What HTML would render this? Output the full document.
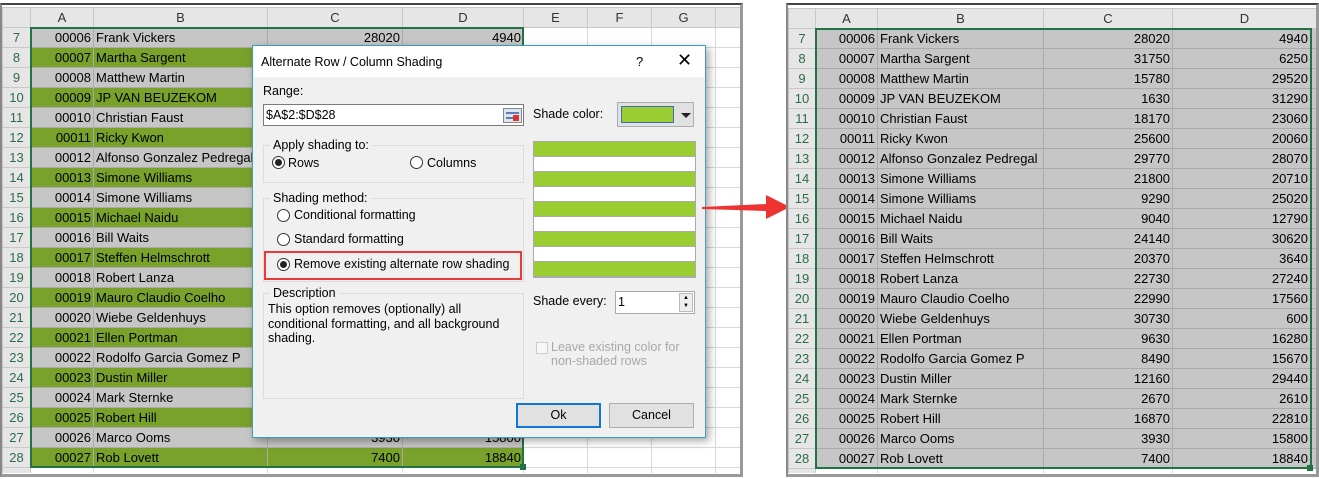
<!DOCTYPE html>
<html><head><meta charset="utf-8"><style>
*{box-sizing:border-box;margin:0;padding:0}
body{width:1319px;height:479px;background:#fff;position:relative;overflow:hidden;font-family:"Liberation Sans",sans-serif;font-size:13px;color:#000}
.grid{position:absolute;border-collapse:collapse;table-layout:fixed}
.grid td{height:20px;border:1px solid #ababab;padding:0 2px;white-space:nowrap;overflow:hidden;line-height:18px}
.grid tr.h td{background:#e6e6e6;text-align:center;color:#333;border-color:#c8c8c8;height:20px}
.grid td.n{background:#e6e6e6;text-align:center;color:#2f6b4a;border-color:#c8c8c8}
.grid td.r{text-align:right}
.grid tr.g td.d{background:#78a22a}
.grid tr.s td.d{background:#c6c6c6}
.grid td.w{background:#fff;border-color:#d9d9d9}
.frame{position:absolute;border-top:2px solid #444;border-left:2px solid #888;border-right:3px solid #999;border-bottom:3px solid #999}
.dlg{position:absolute;left:252px;top:45px;width:454px;height:393px;background:#f0f0f0;border:1px solid #3aa0b4;box-shadow:3px 3px 8px rgba(0,0,0,.35);font-size:12.5px}
.a{position:absolute}
.grp{position:absolute;border:1px solid #dcdcdc}
.lg{position:absolute;background:#f0f0f0;padding:0 3px;top:-8px;left:6px}
.rad{position:absolute;width:13px;height:13px;border:1px solid #333;border-radius:50%;background:#fff}
.rad.on::after{content:"";position:absolute;left:2px;top:2px;width:7px;height:7px;border-radius:50%;background:#222}
.clip{position:absolute;overflow:hidden}
</style></head><body>

<div class="clip" style="left:0;top:0;width:745px;height:473px">
<table class="grid" style="left:2px;top:7px;width:738px">
<colgroup><col style="width:28px"><col style="width:63px"><col style="width:174px"><col style="width:135px"><col style="width:121px"><col style="width:64px"><col style="width:64px"><col style="width:64px"><col style="width:25px"></colgroup>
<tr class="h"><td style="background:#e6e6e6"></td><td>A</td><td>B</td><td>C</td><td>D</td><td>E</td><td>F</td><td>G</td><td></td></tr>
<tr class="s"><td class="n">7</td><td class="d r">00006</td><td class="d">Frank Vickers</td><td class="d r">28020</td><td class="d r">4940</td><td class="w"></td><td class="w"></td><td class="w"></td><td class="w"></td></tr>
<tr class="g"><td class="n">8</td><td class="d r">00007</td><td class="d">Martha Sargent</td><td class="d r">31750</td><td class="d r">6250</td><td class="w"></td><td class="w"></td><td class="w"></td><td class="w"></td></tr>
<tr class="s"><td class="n">9</td><td class="d r">00008</td><td class="d">Matthew Martin</td><td class="d r">15780</td><td class="d r">29520</td><td class="w"></td><td class="w"></td><td class="w"></td><td class="w"></td></tr>
<tr class="g"><td class="n">10</td><td class="d r">00009</td><td class="d">JP VAN BEUZEKOM</td><td class="d r">1630</td><td class="d r">31290</td><td class="w"></td><td class="w"></td><td class="w"></td><td class="w"></td></tr>
<tr class="s"><td class="n">11</td><td class="d r">00010</td><td class="d">Christian Faust</td><td class="d r">18170</td><td class="d r">23060</td><td class="w"></td><td class="w"></td><td class="w"></td><td class="w"></td></tr>
<tr class="g"><td class="n">12</td><td class="d r">00011</td><td class="d">Ricky Kwon</td><td class="d r">25600</td><td class="d r">20060</td><td class="w"></td><td class="w"></td><td class="w"></td><td class="w"></td></tr>
<tr class="s"><td class="n">13</td><td class="d r">00012</td><td class="d">Alfonso Gonzalez Pedregal</td><td class="d r">29770</td><td class="d r">28070</td><td class="w"></td><td class="w"></td><td class="w"></td><td class="w"></td></tr>
<tr class="g"><td class="n">14</td><td class="d r">00013</td><td class="d">Simone Williams</td><td class="d r">21800</td><td class="d r">20710</td><td class="w"></td><td class="w"></td><td class="w"></td><td class="w"></td></tr>
<tr class="s"><td class="n">15</td><td class="d r">00014</td><td class="d">Simone Williams</td><td class="d r">9290</td><td class="d r">25020</td><td class="w"></td><td class="w"></td><td class="w"></td><td class="w"></td></tr>
<tr class="g"><td class="n">16</td><td class="d r">00015</td><td class="d">Michael Naidu</td><td class="d r">9040</td><td class="d r">12790</td><td class="w"></td><td class="w"></td><td class="w"></td><td class="w"></td></tr>
<tr class="s"><td class="n">17</td><td class="d r">00016</td><td class="d">Bill Waits</td><td class="d r">24140</td><td class="d r">30620</td><td class="w"></td><td class="w"></td><td class="w"></td><td class="w"></td></tr>
<tr class="g"><td class="n">18</td><td class="d r">00017</td><td class="d">Steffen Helmschrott</td><td class="d r">20370</td><td class="d r">3640</td><td class="w"></td><td class="w"></td><td class="w"></td><td class="w"></td></tr>
<tr class="s"><td class="n">19</td><td class="d r">00018</td><td class="d">Robert Lanza</td><td class="d r">22730</td><td class="d r">27240</td><td class="w"></td><td class="w"></td><td class="w"></td><td class="w"></td></tr>
<tr class="g"><td class="n">20</td><td class="d r">00019</td><td class="d">Mauro Claudio Coelho</td><td class="d r">22990</td><td class="d r">17560</td><td class="w"></td><td class="w"></td><td class="w"></td><td class="w"></td></tr>
<tr class="s"><td class="n">21</td><td class="d r">00020</td><td class="d">Wiebe Geldenhuys</td><td class="d r">30730</td><td class="d r">600</td><td class="w"></td><td class="w"></td><td class="w"></td><td class="w"></td></tr>
<tr class="g"><td class="n">22</td><td class="d r">00021</td><td class="d">Ellen Portman</td><td class="d r">9630</td><td class="d r">16280</td><td class="w"></td><td class="w"></td><td class="w"></td><td class="w"></td></tr>
<tr class="s"><td class="n">23</td><td class="d r">00022</td><td class="d">Rodolfo Garcia Gomez P</td><td class="d r">8490</td><td class="d r">15670</td><td class="w"></td><td class="w"></td><td class="w"></td><td class="w"></td></tr>
<tr class="g"><td class="n">24</td><td class="d r">00023</td><td class="d">Dustin Miller</td><td class="d r">12160</td><td class="d r">29440</td><td class="w"></td><td class="w"></td><td class="w"></td><td class="w"></td></tr>
<tr class="s"><td class="n">25</td><td class="d r">00024</td><td class="d">Mark Sternke</td><td class="d r">2670</td><td class="d r">2610</td><td class="w"></td><td class="w"></td><td class="w"></td><td class="w"></td></tr>
<tr class="g"><td class="n">26</td><td class="d r">00025</td><td class="d">Robert Hill</td><td class="d r">16870</td><td class="d r">22810</td><td class="w"></td><td class="w"></td><td class="w"></td><td class="w"></td></tr>
<tr class="s"><td class="n">27</td><td class="d r">00026</td><td class="d">Marco Ooms</td><td class="d r">3930</td><td class="d r">15800</td><td class="w"></td><td class="w"></td><td class="w"></td><td class="w"></td></tr>
<tr class="g"><td class="n">28</td><td class="d r">00027</td><td class="d">Rob Lovett</td><td class="d r">7400</td><td class="d r">18840</td><td class="w"></td><td class="w"></td><td class="w"></td><td class="w"></td></tr>
<tr><td class="n"></td><td class="w"></td><td class="w"></td><td class="w"></td><td class="w"></td><td class="w"></td><td class="w"></td><td class="w"></td><td class="w"></td></tr>
</table>
</div>
<div class="frame" style="left:0;top:3px;width:743px;height:474px"></div>
<div class="a" style="left:30px;top:27px;width:494px;height:441px;border:2px solid #217346"></div>
<div class="a" style="left:520px;top:464px;width:6px;height:6px;background:#217346"></div>

<div class="dlg">
 <div class="a" style="left:0;top:0;width:452px;height:31px;background:#fff"></div>
 <div class="a" style="left:8px;top:9px">Alternate Row / Column Shading</div>
 <div class="a" style="left:383px;top:8px;font-size:13px">?</div>
 <div class="a" style="left:424px;top:4px;font-size:18px;font-weight:300">✕</div>
 <div class="a" style="left:10px;top:38px">Range:</div>
 <div class="a" style="left:10px;top:58px;width:261px;height:22px;border:1px solid #7a7a7a;background:#fff;padding:3px 2px">$A$2:$D$28</div>
 <div class="a" style="left:250px;top:62px;width:19px;height:15px;border:1px solid #888;background:#dde6f0"><div style="margin:3px 2px;height:7px;border-top:2px solid #5b7fb5;border-bottom:2px solid #5b7fb5"></div><div style="position:absolute;left:9px;top:6px;width:6px;height:6px;background:#d33"></div></div>
 <div class="a" style="left:280px;top:61px">Shade color:</div>
 <div class="a" style="left:364px;top:56px;width:77px;height:25px;border:1px solid #adadad;background:#e1e1e1"><div style="position:absolute;left:3px;top:3px;width:53px;height:17px;border:1px solid #3c6fb0;background:#9acd32"></div><div style="position:absolute;left:63px;top:10px;border-left:5px solid transparent;border-right:5px solid transparent;border-top:5px solid #222"></div></div>
 <div class="a" style="left:280px;top:95px;width:163px;height:137px;border:1px solid #aaa;background:repeating-linear-gradient(#9acd32 0 14px,#aaa 14px 15px,#fff 15px 29px,#aaa 29px 30px)"></div>
 <div class="grp" style="left:10px;top:99px;width:261px;height:38px"><span class="lg">Apply shading to:</span></div>
 <div class="rad on" style="left:19px;top:110px"></div><div class="a" style="left:35px;top:110px">Rows</div>
 <div class="rad" style="left:157px;top:110px"></div><div class="a" style="left:174px;top:110px">Columns</div>
 <div class="grp" style="left:10px;top:152px;width:261px;height:84px"><span class="lg">Shading method:</span></div>
 <div class="rad" style="left:24px;top:163px"></div><div class="a" style="left:41px;top:162px">Conditional formatting</div>
 <div class="rad" style="left:24px;top:187px"></div><div class="a" style="left:41px;top:186px">Standard formatting</div>
 <div class="a" style="left:11px;top:205px;width:258px;height:29px;border:2px solid #ea3a3a"></div>
 <div class="rad on" style="left:24px;top:212px"></div><div class="a" style="left:41px;top:211px">Remove existing alternate row shading</div>
 <div class="grp" style="left:10px;top:247px;width:261px;height:106px"><span class="lg">Description</span></div>
 <div class="a" style="left:15px;top:256px;line-height:14.5px;white-space:nowrap;font-size:12.5px">This option removes (optionally) all<br>conditional formatting, and all background<br>shading.</div>
 <div class="a" style="left:280px;top:248px">Shade every:</div>
 <div class="a" style="left:362px;top:245px;width:80px;height:23px;border:1px solid #aaa;background:#fff;padding:3px 2px">1<div style="position:absolute;right:1px;top:1px;width:14px;height:19px;border:1px solid #bbb;background:#eee;font-size:6px;line-height:8px;text-align:center">▲<br>▼</div></div>
 <div class="a" style="left:283px;top:296px;width:12px;height:12px;border:1px solid #ccc;background:#f7f7f7"></div>
 <div class="a" style="left:298px;top:294px;color:#a8a8a8;line-height:14px">Leave existing color for<br>non-shaded rows</div>
 <div class="a" style="left:263px;top:357px;width:85px;height:25px;border:2px solid #0f78d7;background:#e1e1e1;text-align:center;line-height:21px">Ok</div>
 <div class="a" style="left:356px;top:357px;width:85px;height:25px;border:1px solid #adadad;background:#e1e1e1;text-align:center;line-height:23px">Cancel</div>
</div>

<svg class="a" style="left:700px;top:190px" width="92" height="36"><polygon points="2,17 66,14 66,5 90,17 66,29 66,21 2,19" fill="#ee3333"/></svg>

<div class="clip" style="left:786px;top:0;width:533px;height:473px">
<table class="grid" style="left:2px;top:8px;width:528px">
<colgroup><col style="width:27px"><col style="width:62px"><col style="width:166px"><col style="width:129px"><col style="width:144px"></colgroup>
<tr class="h"><td></td><td>A</td><td>B</td><td>C</td><td>D</td></tr>
<tr class="s"><td class="n">7</td><td class="d r">00006</td><td class="d">Frank Vickers</td><td class="d r">28020</td><td class="d r" style="padding-right:8px">4940</td></tr>
<tr class="s"><td class="n">8</td><td class="d r">00007</td><td class="d">Martha Sargent</td><td class="d r">31750</td><td class="d r" style="padding-right:8px">6250</td></tr>
<tr class="s"><td class="n">9</td><td class="d r">00008</td><td class="d">Matthew Martin</td><td class="d r">15780</td><td class="d r" style="padding-right:8px">29520</td></tr>
<tr class="s"><td class="n">10</td><td class="d r">00009</td><td class="d">JP VAN BEUZEKOM</td><td class="d r">1630</td><td class="d r" style="padding-right:8px">31290</td></tr>
<tr class="s"><td class="n">11</td><td class="d r">00010</td><td class="d">Christian Faust</td><td class="d r">18170</td><td class="d r" style="padding-right:8px">23060</td></tr>
<tr class="s"><td class="n">12</td><td class="d r">00011</td><td class="d">Ricky Kwon</td><td class="d r">25600</td><td class="d r" style="padding-right:8px">20060</td></tr>
<tr class="s"><td class="n">13</td><td class="d r">00012</td><td class="d">Alfonso Gonzalez Pedregal</td><td class="d r">29770</td><td class="d r" style="padding-right:8px">28070</td></tr>
<tr class="s"><td class="n">14</td><td class="d r">00013</td><td class="d">Simone Williams</td><td class="d r">21800</td><td class="d r" style="padding-right:8px">20710</td></tr>
<tr class="s"><td class="n">15</td><td class="d r">00014</td><td class="d">Simone Williams</td><td class="d r">9290</td><td class="d r" style="padding-right:8px">25020</td></tr>
<tr class="s"><td class="n">16</td><td class="d r">00015</td><td class="d">Michael Naidu</td><td class="d r">9040</td><td class="d r" style="padding-right:8px">12790</td></tr>
<tr class="s"><td class="n">17</td><td class="d r">00016</td><td class="d">Bill Waits</td><td class="d r">24140</td><td class="d r" style="padding-right:8px">30620</td></tr>
<tr class="s"><td class="n">18</td><td class="d r">00017</td><td class="d">Steffen Helmschrott</td><td class="d r">20370</td><td class="d r" style="padding-right:8px">3640</td></tr>
<tr class="s"><td class="n">19</td><td class="d r">00018</td><td class="d">Robert Lanza</td><td class="d r">22730</td><td class="d r" style="padding-right:8px">27240</td></tr>
<tr class="s"><td class="n">20</td><td class="d r">00019</td><td class="d">Mauro Claudio Coelho</td><td class="d r">22990</td><td class="d r" style="padding-right:8px">17560</td></tr>
<tr class="s"><td class="n">21</td><td class="d r">00020</td><td class="d">Wiebe Geldenhuys</td><td class="d r">30730</td><td class="d r" style="padding-right:8px">600</td></tr>
<tr class="s"><td class="n">22</td><td class="d r">00021</td><td class="d">Ellen Portman</td><td class="d r">9630</td><td class="d r" style="padding-right:8px">16280</td></tr>
<tr class="s"><td class="n">23</td><td class="d r">00022</td><td class="d">Rodolfo Garcia Gomez P</td><td class="d r">8490</td><td class="d r" style="padding-right:8px">15670</td></tr>
<tr class="s"><td class="n">24</td><td class="d r">00023</td><td class="d">Dustin Miller</td><td class="d r">12160</td><td class="d r" style="padding-right:8px">29440</td></tr>
<tr class="s"><td class="n">25</td><td class="d r">00024</td><td class="d">Mark Sternke</td><td class="d r">2670</td><td class="d r" style="padding-right:8px">2610</td></tr>
<tr class="s"><td class="n">26</td><td class="d r">00025</td><td class="d">Robert Hill</td><td class="d r">16870</td><td class="d r" style="padding-right:8px">22810</td></tr>
<tr class="s"><td class="n">27</td><td class="d r">00026</td><td class="d">Marco Ooms</td><td class="d r">3930</td><td class="d r" style="padding-right:8px">15800</td></tr>
<tr class="s"><td class="n">28</td><td class="d r">00027</td><td class="d">Rob Lovett</td><td class="d r">7400</td><td class="d r" style="padding-right:8px">18840</td></tr>
<tr><td class="n"></td><td class="w"></td><td class="w"></td><td class="w"></td><td class="w"></td></tr>
</table>
</div>
<div class="frame" style="left:786px;top:3px;width:533px;height:474px"></div>
<div class="a" style="left:815px;top:28px;width:497px;height:441px;border:2px solid #217346"></div>
<div class="a" style="left:1307px;top:465px;width:6px;height:6px;background:#217346"></div>
</body></html>
